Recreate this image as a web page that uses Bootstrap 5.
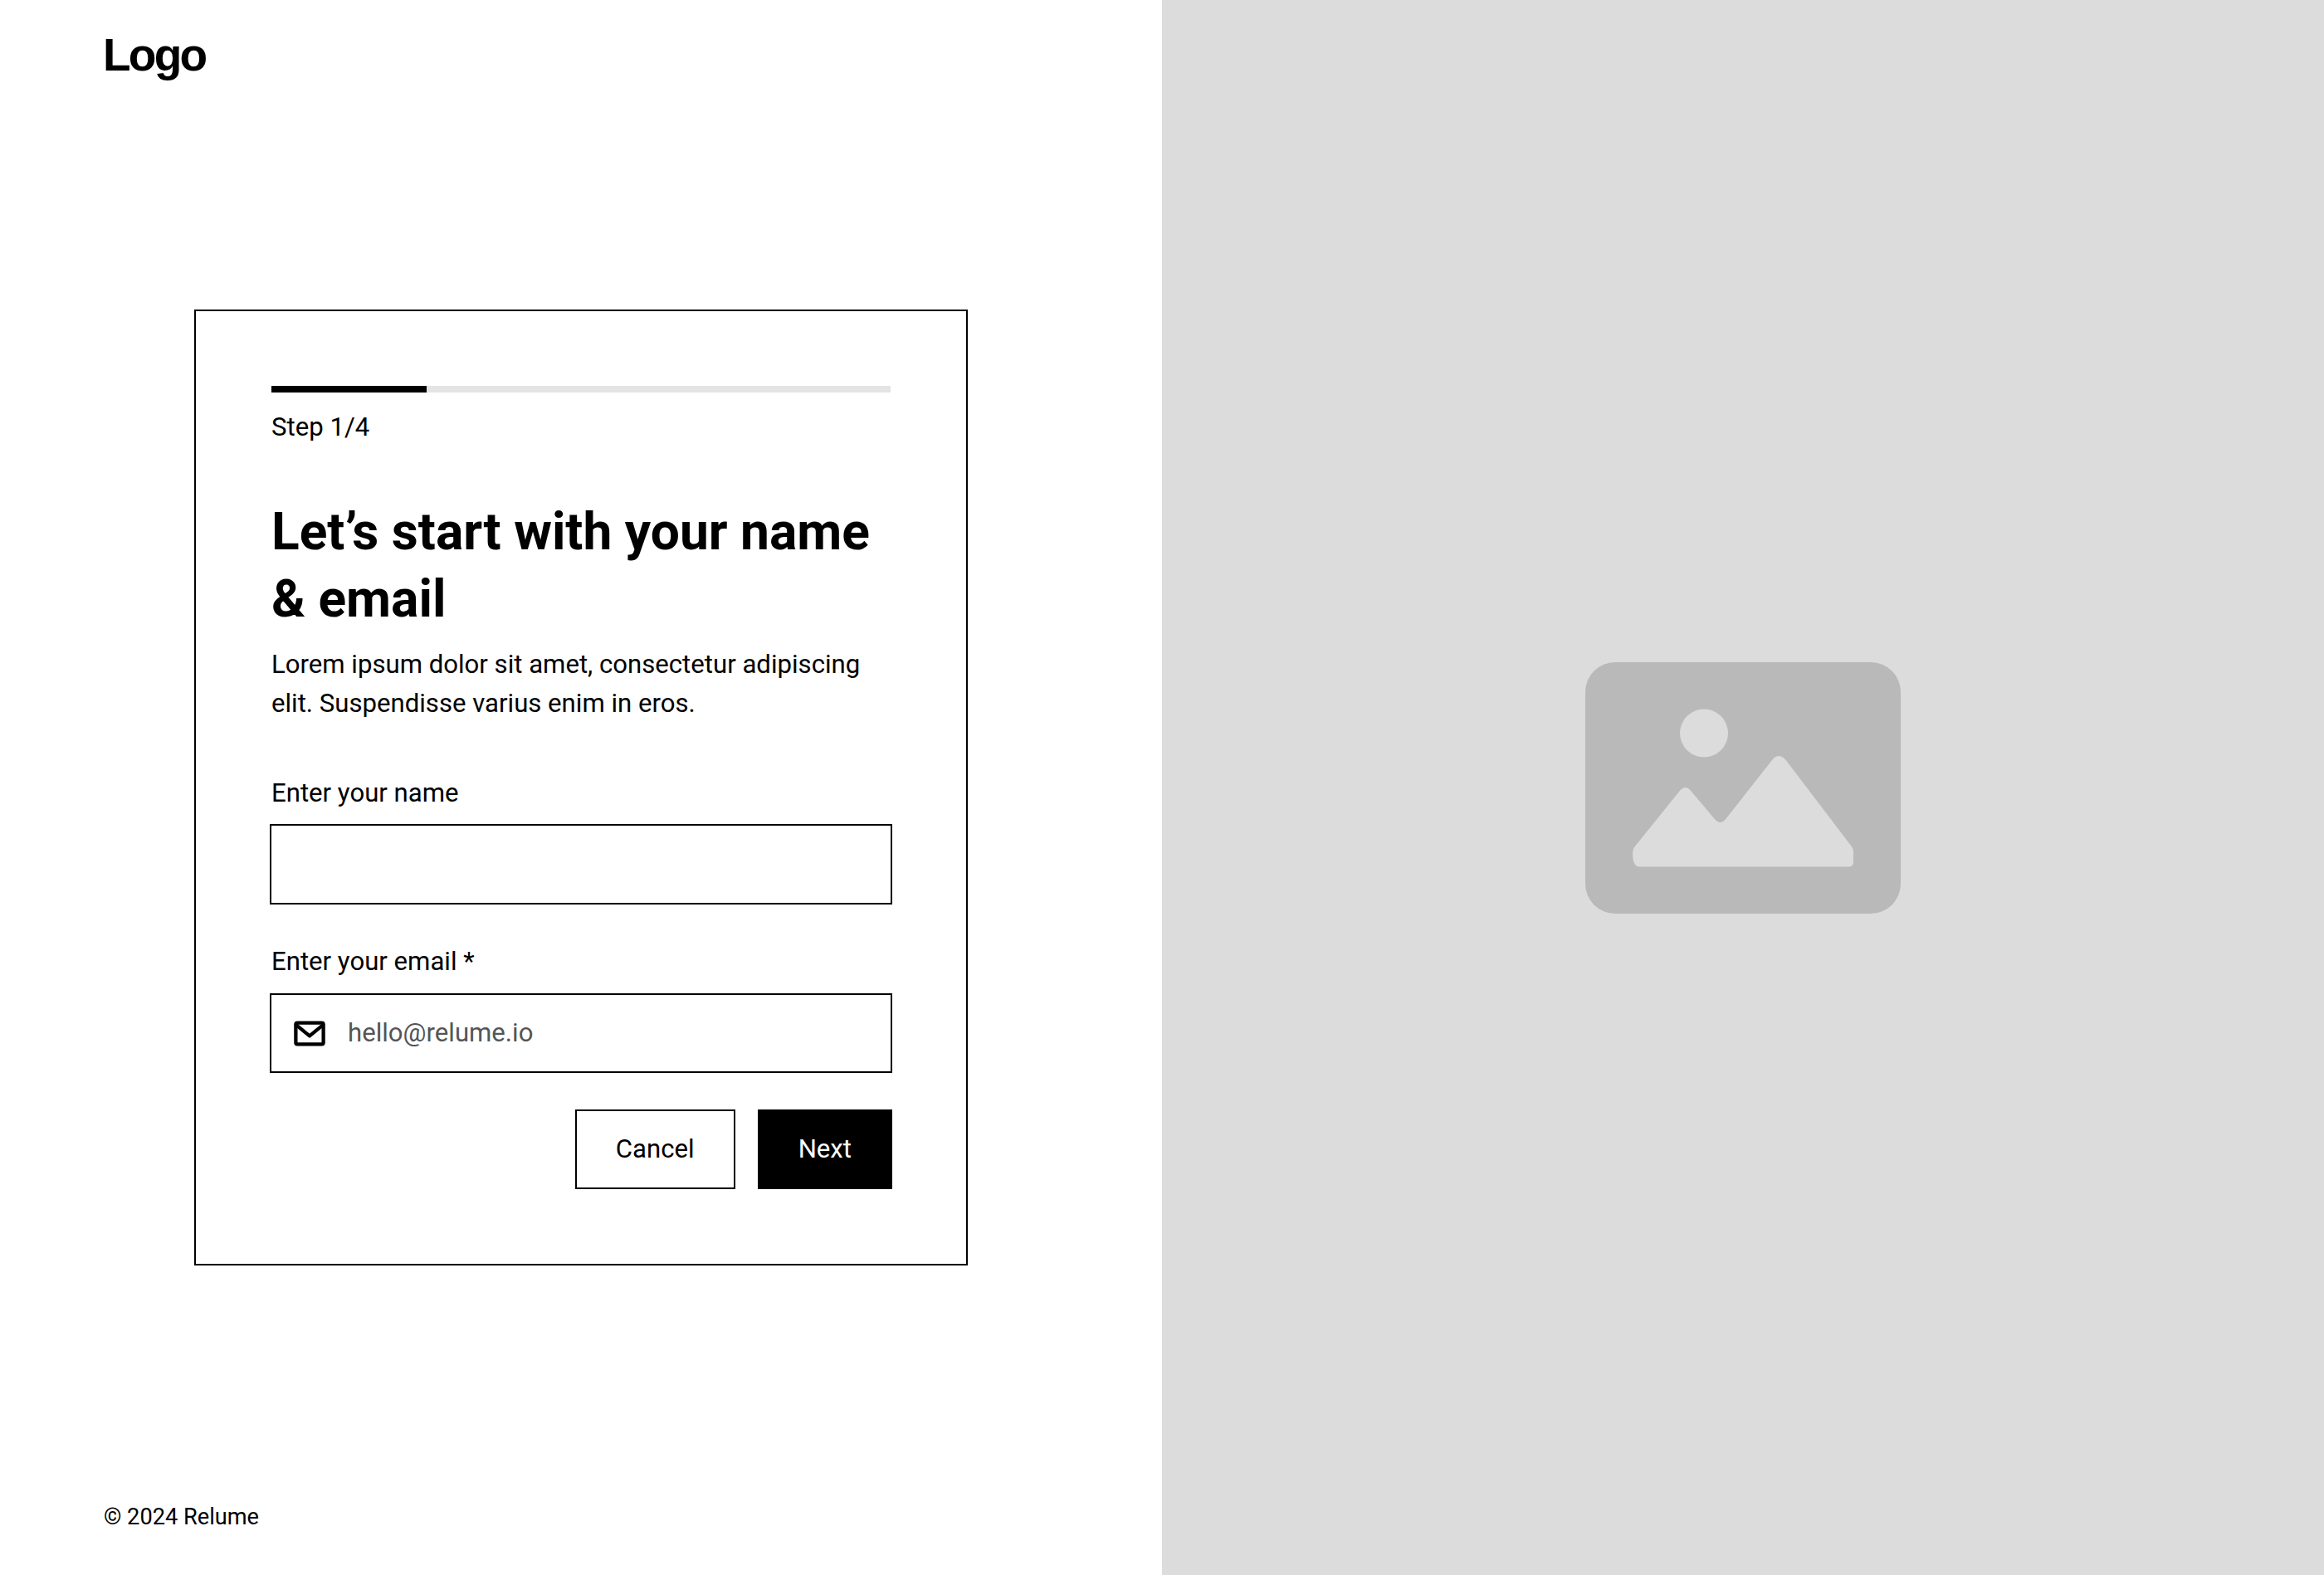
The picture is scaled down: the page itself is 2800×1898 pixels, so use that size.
<!DOCTYPE html>
<html lang="en">
<head>
    <meta charset="UTF-8">
    <meta name="viewport" content="width=device-width, initial-scale=1.0">
    <title>Relume - Step 1/4</title>
    <link href="https://cdn.jsdelivr.net/npm/bootstrap@5.3.0/dist/css/bootstrap.min.css" rel="stylesheet">
    <style>
        body {
            font-family: Roboto, "Liberation Sans", sans-serif;
            font-size: 31.15px;
            line-height: 46.5px;
            color: #000;
            background-color: #fff;
        }

        .page-split {
            height: 1898px;
        }

        .form-side {
            width: 1400px;
            flex: none;
            display: grid;
            grid-template-rows: 1fr auto 1fr;
            padding: 0 124px;
        }

        .image-side {
            flex: 1;
            background-color: #dcdcdc;
        }

        .brand-logo {
            font-family: "Liberation Sans", sans-serif;
            font-size: 55px;
            font-weight: 700;
            letter-spacing: -0.05em;
            line-height: 1;
            padding-top: 39px;
        }

        .step-box {
            width: 932px;
            justify-self: center;
            border: 2px solid #000;
            padding: 90px 91px;
        }

        .step-track {
            height: 8px;
            background-color: #e4e4e4;
            margin-bottom: 19px;
        }

        .step-fill {
            height: 100%;
            background-color: #000;
        }

        .step-title {
            font-size: 62.3px;
            font-weight: 700;
            line-height: 81px;
            margin: 62px 0 16px;
        }

        .step-text {
            margin-bottom: 62px;
        }

        .field-label {
            display: block;
            margin-bottom: 13px;
        }

        .field-label-email {
            margin-bottom: 15px;
        }

        .field-box {
            height: 96px;
            margin: 0 -2px 46px;
            border: 2px solid #000;
            border-radius: 0;
            font-size: 31.15px;
            padding: 0 27px;
        }

        .form-control.field-box {
            height: 97px;
        }

        .field-box input {
            font-size: 31.15px;
            color: #000;
            padding: 0;
            border: 0;
            box-shadow: none;
        }

        .field-box input::placeholder {
            color: #555;
        }

        .field-last {
            margin-bottom: 44px;
        }

        .step-btn {
            height: 96px;
            font-size: 31.15px;
            border: 2px solid #000;
            border-radius: 0;
            padding: 0 47px;
            color: #000;
            background-color: #fff;
        }

        .step-btn-dark {
            color: #fff;
            background-color: #000;
        }

        .step-actions {
            gap: 27px;
            margin-right: -2px;
        }

        .copyright {
            font-size: 27.2px;
            line-height: 38px;
            padding: 0 0 51px 1px;
        }
    </style>
</head>
<body>
    <div class="page-split d-flex">
        <div class="form-side">
            <div class="brand-logo">Logo</div>

            <form class="step-box">
                <div class="step-track">
                    <div class="step-fill" style="width: 25%"></div>
                </div>
                <div>Step 1/4</div>
                <h1 class="step-title">Let’s start with your name &amp; email</h1>
                <p class="step-text">Lorem ipsum dolor sit amet, consectetur adipiscing elit. Suspendisse varius enim in eros.</p>

                <label class="field-label" for="nameInput">Enter your name</label>
                <input class="form-control field-box" id="nameInput" type="text" style="width: calc(100% + 4px)">

                <label class="field-label field-label-email" for="emailInput">Enter your email *</label>
                <div class="field-box field-last d-flex align-items-center" style="gap: 27px">
                    <svg class="flex-shrink-0" width="38" height="31" viewBox="0 0 40 32" fill="none" stroke="#000" stroke-width="4.500" stroke-linejoin="round" stroke-linecap="round">
                        <rect x="2.500" y="2.500" width="35" height="27" rx="2"></rect>
                        <path d="M3 5l17 14L37 5"></path>
                    </svg>
                    <input class="form-control" id="emailInput" type="text" placeholder="hello@relume.io">
                </div>

                <div class="step-actions d-flex justify-content-end">
                    <button type="button" class="btn step-btn">Cancel</button>
                    <button type="button" class="btn step-btn step-btn-dark">Next</button>
                </div>
            </form>

            <div class="copyright align-self-end">© 2024 Relume</div>
        </div>

        <div class="image-side d-flex align-items-center justify-content-center">
            <svg width="380" height="303" viewBox="0 0 380 303">
                <rect width="380" height="303" rx="36" fill="#b9b9b9"></rect>
                <circle cx="143" cy="85.500" r="29" fill="#dcdcdc"></circle>
                <path fill="#dcdcdc" d="M57 230Q57 246 65 246.500H318Q323 246 323 241V229Q323 224 320 221L241.700 118Q232.700 108 225 118L170 188Q162.700 198 155 188L128 156Q120.700 146 113 156L59 223Q57 226 57 230Z"></path>
            </svg>
        </div>
    </div>
    <script src="https://cdn.jsdelivr.net/npm/bootstrap@5.3.0/dist/js/bootstrap.bundle.min.js"></script>
</body>
</html>
